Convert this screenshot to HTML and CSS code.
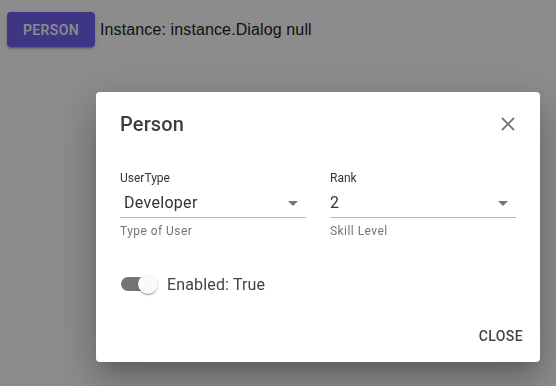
FILE: index.html
```html
<!DOCTYPE html>
<html>
<head>
<meta charset="utf-8">
<link rel="stylesheet" href="styles.css">
</head>
<body>
<div class="top">
  <button class="btn-primary">PERSON</button>
  <span class="instance">Instance: instance.Dialog null</span>
</div>
<div class="backdrop">
  <div class="dialog">
    <div class="title-row">
      <h2 class="title">Person</h2>
      <button class="icon-btn" aria-label="close">
        <svg width="14" height="14" viewBox="0 0 14 14"><path d="M1 1L13 13M13 1L1 13" stroke="#757575" stroke-width="1.8" fill="none"/></svg>
      </button>
    </div>
    <div class="content">
      <div class="fields">
        <div class="field">
          <label class="label">UserType</label>
          <div class="select"><span class="value indent">Developer</span><span class="arrow"></span></div>
          <div class="helper">Type of User</div>
        </div>
        <div class="field">
          <label class="label">Rank</label>
          <div class="select"><span class="value">2</span><span class="arrow"></span></div>
          <div class="helper">Skill Level</div>
        </div>
      </div>
      <div class="switch-row">
        <span class="switch"><span class="track"></span><span class="thumb"></span></span>
        <span class="switch-label">Enabled: True</span>
      </div>
    </div>
    <div class="actions">
      <button class="text-btn">CLOSE</button>
    </div>
  </div>
</div>
</body>
</html>
```
FILE: styles.css
```css
html, body {
  margin: 0;
  padding: 0;
  background: #fff;
  width: 556px;
  height: 386px;
  overflow: hidden;
  font-family: Roboto, "Liberation Sans", sans-serif;
}
.top {
  display: flex;
  align-items: center;
  padding: 12px 0 0 7px;
  gap: 5px;
}
.btn-primary {
  width: 88px;
  height: 35px;
  border: none;
  border-radius: 4px;
  background: #7461f5;
  color: #fff;
  font-family: Roboto, sans-serif;
  font-weight: 500;
  font-size: 14px;
  letter-spacing: 0.4px;
  box-shadow: 0 3px 1px -2px rgba(0,0,0,.2), 0 2px 2px 0 rgba(0,0,0,.14), 0 1px 5px 0 rgba(0,0,0,.12);
}
.instance {
  font-family: "Liberation Sans", Arial, sans-serif;
  font-size: 16px;
  letter-spacing: 0.12px;
  color: #222;
}
.backdrop {
  position: fixed;
  inset: 0;
  background: rgba(0,0,0,0.45);
  display: flex;
  align-items: flex-start;
  padding: 92px 0 0 96px;
}
.dialog {
  width: 444px;
  height: 270px;
  background: #fff;
  border-radius: 4px;
  box-shadow: 0 11px 15px -7px rgba(0,0,0,.2), 0 24px 38px 3px rgba(0,0,0,.14), 0 9px 46px 8px rgba(0,0,0,.12);
  display: flex;
  flex-direction: column;
  box-sizing: border-box;
}
.title-row {
  display: flex;
  align-items: center;
  justify-content: space-between;
  padding: 16px 8px 0 24px;
  height: 32px;
}
.title {
  margin: 0;
  font-size: 20px;
  font-weight: 500;
  line-height: 32px;
  color: #3d3d3d;
  letter-spacing: 0.15px;
}
.icon-btn {
  width: 48px;
  height: 48px;
  border: none;
  background: none;
  padding: 0;
  display: flex;
  align-items: center;
  justify-content: center;
}
.content {
  padding: 30px 24px 0 24px;
  flex: 1;
}
.fields {
  display: flex;
  gap: 24px;
}
.field {
  width: 186px;
  display: flex;
  flex-direction: column;
}
.label {
  font-size: 12px;
  line-height: 16px;
  color: #333;
}
.select {
  display: flex;
  align-items: center;
  justify-content: space-between;
  height: 28px;
  border-bottom: 1px solid #b8b8b8;
  padding: 0 8px 0 0;
  margin-top: 3px;
}
.value {
  font-size: 16px;
  color: #333;
  line-height: 20px;
  letter-spacing: 0.3px;
}
.value.indent {
  padding-left: 4px;
}
.arrow {
  width: 0;
  height: 0;
  border-left: 5px solid transparent;
  border-right: 5px solid transparent;
  border-top: 5px solid #757575;
}
.helper {
  font-size: 12px;
  color: #757575;
  letter-spacing: 0.45px;
  margin-top: 6px;
  line-height: 14px;
}
.switch-row {
  display: flex;
  align-items: center;
  margin-top: 36px;
  gap: 9px;
}
.switch {
  position: relative;
  width: 38px;
  height: 20px;
  display: inline-block;
}
.track {
  position: absolute;
  left: 1px;
  top: 3px;
  width: 34px;
  height: 14px;
  border-radius: 7px;
  background: #757575;
}
.thumb {
  position: absolute;
  left: 18px;
  top: 0;
  width: 20px;
  height: 20px;
  border-radius: 50%;
  background: #fafafa;
  box-shadow: 0 2px 1px -1px rgba(0,0,0,.2), 0 1px 1px 0 rgba(0,0,0,.14), 0 1px 3px 0 rgba(0,0,0,.12);
}
.switch-label {
  font-size: 16px;
  letter-spacing: 0.15px;
  color: #444;
}
.actions {
  display: flex;
  justify-content: flex-end;
  padding: 8px 9px 8px 8px;
}
.text-btn {
  border: none;
  background: none;
  font-family: Roboto, sans-serif;
  font-size: 14px;
  font-weight: 500;
  letter-spacing: 0.4px;
  color: #444;
  padding: 6px 8px;
  height: 36px;
}
```
